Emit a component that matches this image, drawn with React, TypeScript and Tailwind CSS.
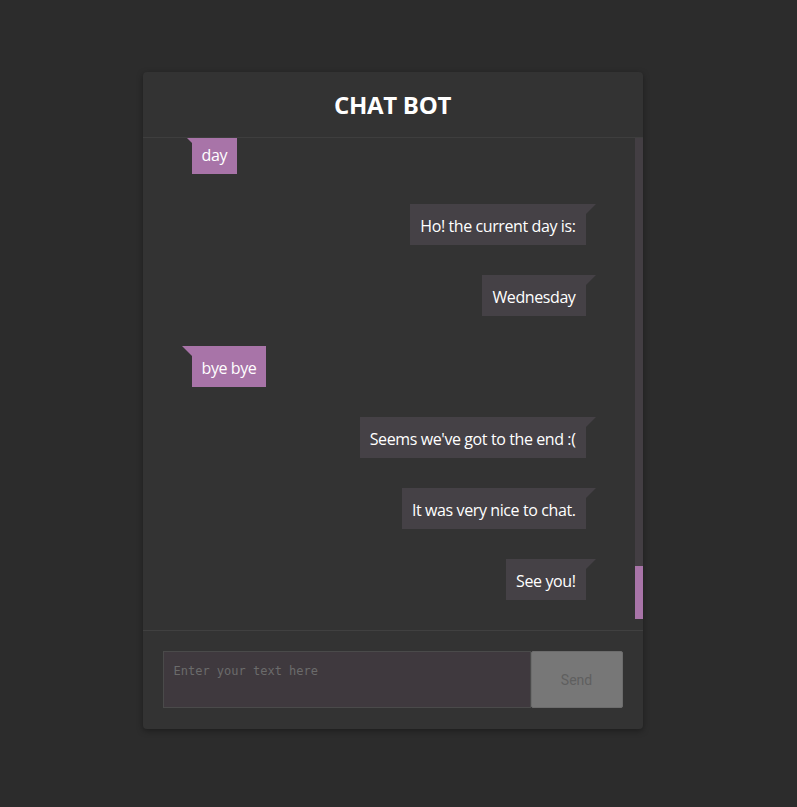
type Message = {
  from: "user" | "bot";
  text: string;
};

const messages: Message[] = [
  { from: "user", text: "day" },
  { from: "bot", text: "Ho! the current day is:" },
  { from: "bot", text: "Wednesday" },
  { from: "user", text: "bye bye" },
  { from: "bot", text: "Seems we've got to the end :(" },
  { from: "bot", text: "It was very nice to chat." },
  { from: "bot", text: "See you!" },
];

const Bubble: React.FC<{ message: Message }> = ({ message }) => {
  if (message.from === "user") {
    return (
      <div className="flex justify-start shrink-0">
        <p className="relative bg-[#a874a8] px-[10px] pt-[2px] h-[41px] flex items-center text-white text-base tracking-[-0.4px] before:content-[''] before:absolute before:top-0 before:-left-[10px] before:w-0 before:h-0 before:border-t-[10px] before:border-t-[#a874a8] before:border-l-[10px] before:border-l-transparent">
          {message.text}
        </p>
      </div>
    );
  }
  return (
    <div className="flex justify-end shrink-0">
      <p className="relative bg-[#454146] px-[10px] pt-[2px] h-[41px] flex items-center text-white text-base tracking-[-0.4px] before:content-[''] before:absolute before:top-0 before:-right-[10px] before:w-0 before:h-0 before:border-t-[10px] before:border-t-[#454146] before:border-r-[10px] before:border-r-transparent">
        {message.text}
      </p>
    </div>
  );
};

export default function App() {
  return (
    <main
      className="min-h-screen bg-[#2c2c2c] flex justify-center pt-[72px] pr-3"
      style={{ fontFamily: '"Open Sans", "Noto Sans", sans-serif' }}
    >
      <section className="w-[500px] h-[657px] bg-[#333333] rounded-[4px] shadow-[0_2px_6px_rgba(0,0,0,0.35)] flex flex-col">
        <header className="h-[66px] border-b border-[#3e3e3e] flex items-center justify-center">
          <h1 className="text-white font-bold text-[24px] tracking-[-0.3px]">
            CHAT BOT
          </h1>
        </header>
        <div className="h-[481px] flex">
          <div className="flex-1 overflow-hidden flex flex-col justify-end gap-[30px] px-[49px] pb-[19px]">
            {messages.map((m, i) => (
              <Bubble key={i} message={m} />
            ))}
          </div>
          <div className="w-2 bg-[#433e43] flex flex-col justify-end">
            <div className="h-[53px] bg-[#a874a8]" />
          </div>
        </div>
        <div className="mt-[11px] border-t border-[#404040] flex-1 p-5 flex">
          <textarea
            placeholder="Enter your text here"
            className="flex-1 h-[57px] resize-none bg-[#3f393e] border border-[#4a4a4a] p-[10px] text-[12px] text-white placeholder:text-[#6b6b6b] outline-none"
            style={{ fontFamily: '"DejaVu Sans Mono", monospace' }}
          />
          <button className="w-[92px] h-[57px] bg-[#777777] border border-[#6c6c6c] rounded-[2px] text-[#5f5f5f] text-sm font-[Roboto]">
            Send
          </button>
        </div>
      </section>
    </main>
  );
}
